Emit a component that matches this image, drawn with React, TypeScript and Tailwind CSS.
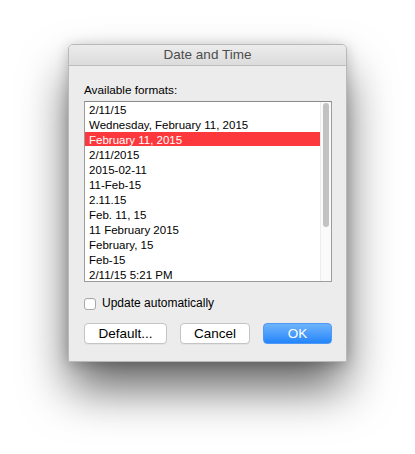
const formats = [
  "2/11/15",
  "Wednesday, February 11, 2015",
  "February 11, 2015",
  "2/11/2015",
  "2015-02-11",
  "11-Feb-15",
  "2.11.15",
  "Feb. 11, 15",
  "11 February 2015",
  "February, 15",
  "Feb-15",
  "2/11/15 5:21 PM",
];

const selected = 2;

export default function App() {
  return (
    <div
      className="min-h-[454px] w-[415px] bg-white pt-[44px] pl-[68px]"
      style={{ fontFamily: '"Liberation Sans", Arial, sans-serif' }}
    >
      {/* Dialog window */}
      <div className="w-[279px] h-[318px] rounded-t-[5px] border border-[#b9b9b9] bg-[#ececec] shadow-[0_28px_48px_-2px_rgba(0,0,0,0.62),0_2px_14px_rgba(0,0,0,0.2)] overflow-hidden">
        {/* Title bar */}
        <div className="h-[21px] border-b border-[#bdbdbd] bg-gradient-to-b from-[#ececec] to-[#dcdcdc] flex items-center justify-center text-[13.5px] text-[#4c4c4c]">
          Date and Time
        </div>

        {/* Body */}
        <div className="pl-[15px] pr-[14px] pt-[16px]">
          <div className="text-[11.75px] leading-[15px] text-black mb-[4px]">
            Available formats:
          </div>

          {/* List box */}
          <div className="h-[181px] border border-[#9c9c9c] border-t-[#8a8a8a] bg-white flex overflow-hidden">
            <div className="flex-1 flex flex-col">
              {formats.map((f, i) => (
                <div key={f} className="h-[15px] shrink-0">
                  <div
                    className={
                      i === selected
                        ? "h-[14px] bg-[#fc383d] text-white pl-[4px] text-[11.5px] leading-[16px]"
                        : "h-[14px] text-black pl-[4px] text-[11.5px] leading-[16px]"
                    }
                  >
                    {f}
                  </div>
                </div>
              ))}
            </div>

            {/* Scrollbar */}
            <div className="w-[11px] border-l border-[#ededed] bg-[#fafafa] flex justify-center pt-[1px]">
              <div className="w-[6px] h-[124px] rounded-[3px] bg-[#c2c2c2]" />
            </div>
          </div>

          {/* Checkbox */}
          <div className="mt-[15px] h-[13px] flex items-center gap-[6px]">
            <div className="w-[12px] h-[12px] rounded-[3px] border border-[#a9a9a9] bg-white shadow-[inset_0_1px_0_rgba(0,0,0,0.04)]" />
            <span className="text-[12px] leading-[13px] text-black">
              Update automatically
            </span>
          </div>

          {/* Buttons */}
          <div className="mt-[13px] flex gap-[13px]">
            <button className="w-[83px] h-[21px] rounded-[4px] border border-[#c4c4c4] bg-white text-[13.5px] leading-[19px] text-black shadow-[0_1px_0_rgba(0,0,0,0.04)]">
              Default...
            </button>
            <button className="w-[70px] h-[21px] rounded-[4px] border border-[#c4c4c4] bg-white text-[13.5px] leading-[19px] text-black shadow-[0_1px_0_rgba(0,0,0,0.04)]">
              Cancel
            </button>
            <button className="w-[69px] h-[21px] rounded-[4px] border border-[#4f98f5] bg-gradient-to-b from-[#6db3fb] to-[#2185fb] text-[13.5px] leading-[19px] text-white">
              OK
            </button>
          </div>
        </div>
      </div>
    </div>
  );
}
